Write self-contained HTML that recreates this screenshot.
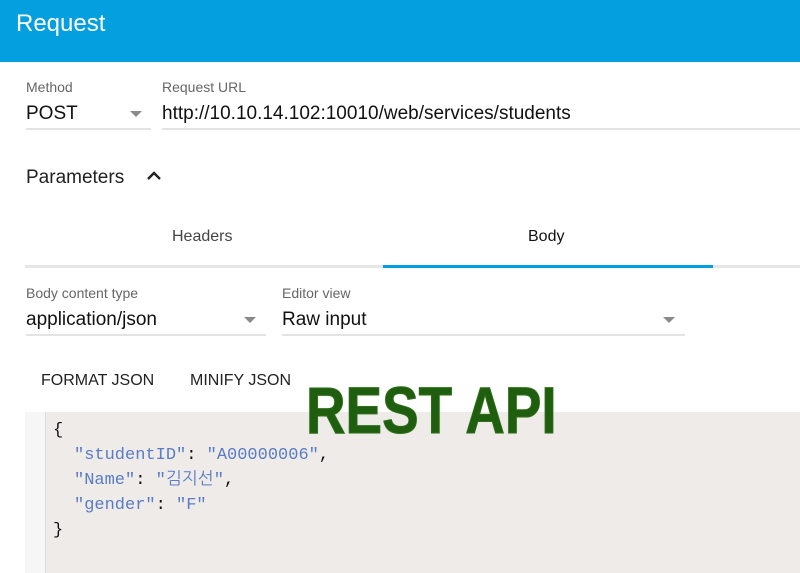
<!DOCTYPE html>
<html><head><meta charset="utf-8"><style>
body{margin:0;width:800px;height:573px;overflow:hidden;background:#fff;font-family:"Liberation Sans",sans-serif;position:relative;color:#222}
.a{position:absolute;white-space:nowrap}
.lbl{font-size:14px;color:#666}
.val{font-size:19px;color:#111}
.ul{position:absolute;height:2px;background:#e3e3e3}
.tri{position:absolute;width:0;height:0;border-left:6px solid transparent;border-right:6px solid transparent;border-top:6px solid #8a8a8a}
.code{font-family:"Liberation Mono","NanumGothic",monospace;font-size:17px;line-height:20px;color:#5a7cc6}
</style></head><body>
<div class="a" style="left:0;top:0;width:800px;height:62px;background:#039fdf"></div>
<div class="a" style="left:16px;top:10px;font-size:24px;color:#fff">Request</div>

<div class="a lbl" style="left:26px;top:79px">Method</div>
<div class="a val" style="left:26px;top:103px">POST</div>
<div class="tri" style="left:130px;top:111px"></div>
<div class="ul" style="left:26px;top:128px;width:125px"></div>
<div class="a lbl" style="left:162px;top:79px">Request URL</div>
<div class="a val" style="left:162px;top:103px">http://10.10.14.102:10010/web/services/students</div>
<div class="ul" style="left:162px;top:128px;width:638px"></div>

<div class="a" style="left:26px;top:167px;font-size:19px;color:#222">Parameters</div>
<svg class="a" style="left:146px;top:170px" width="16" height="12"><path d="M2 9 L8 3 L14 9" stroke="#222" stroke-width="2.4" fill="none"/></svg>

<div class="a" style="left:172px;top:228px;font-size:16px;color:#444">Headers</div>
<div class="a" style="left:528px;top:228px;font-size:16px;color:#111">Body</div>
<div class="a" style="left:25px;top:265px;width:775px;height:3px;background:#e6e6e6"></div>
<div class="a" style="left:383px;top:265px;width:330px;height:3px;background:#039fdf"></div>

<div class="a lbl" style="left:26px;top:285px">Body content type</div>
<div class="a val" style="left:26px;top:309px">application/json</div>
<div class="tri" style="left:244px;top:317px"></div>
<div class="ul" style="left:26px;top:334px;width:240px"></div>
<div class="a lbl" style="left:282px;top:285px">Editor view</div>
<div class="a val" style="left:282px;top:309px">Raw input</div>
<div class="tri" style="left:663px;top:317px"></div>
<div class="ul" style="left:282px;top:334px;width:403px"></div>

<div class="a" style="left:41px;top:372px;font-size:16px;color:#222">FORMAT JSON</div>
<div class="a" style="left:190px;top:372px;font-size:16px;color:#222">MINIFY JSON</div>

<div class="a" style="left:25px;top:412px;width:775px;height:161px;background:#eeebe8"></div>
<div class="a" style="left:25px;top:412px;width:20px;height:161px;background:#f6f6f6;border-right:1px solid #dcdcdc"></div>
<div class="a code" style="left:53px;top:421px;color:#111">{</div>
<div class="a code" style="left:74px;top:446px">"studentID"<span style="color:#111">:</span> "A00000006"<span style="color:#111">,</span></div>
<div class="a code" style="left:74px;top:471px">"Name"<span style="color:#111">:</span> "김지선"<span style="color:#111">,</span></div>
<div class="a code" style="left:74px;top:496px">"gender"<span style="color:#111">:</span> "F"</div>
<div class="a code" style="left:53px;top:521px;color:#111">}</div>

<div class="a" style="left:306px;top:372px;font-size:66px;font-weight:bold;color:#1f5e0f;transform:scaleX(0.83);transform-origin:left top;-webkit-text-stroke:1px #2f6e1a;text-shadow:0 0 2px #cfe5c5">REST API</div>
</body></html>
